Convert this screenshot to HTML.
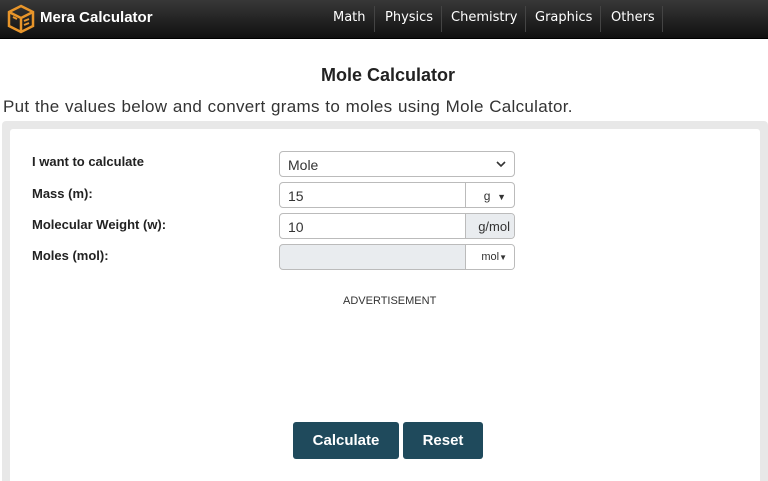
<!DOCTYPE html>
<html><head><style>
*{margin:0;padding:0;box-sizing:border-box}
html,body{width:768px;height:481px;overflow:hidden}
body{background:#fff;font-family:"Liberation Sans",sans-serif;position:relative}
.hdr{position:absolute;left:0;top:0;width:768px;height:39px;background:linear-gradient(#383838,#101010);border-bottom:1px solid #000}
.logo{position:absolute;left:40px;top:9px;color:#fff;font:bold 15px "Liberation Sans",sans-serif}
.nav{position:absolute;top:10px;color:#fff;font:13px "DejaVu Sans",sans-serif}
.sep{position:absolute;top:6px;width:1px;height:26px;background:#444}
h1{position:absolute;top:65px;left:0;width:776px;text-align:center;font-size:18px;font-weight:bold;color:#222}
.sub{position:absolute;top:97px;left:3px;font-size:17px;color:#333;letter-spacing:0.3px;word-spacing:0.5px}
.panel{position:absolute;left:2px;top:121px;width:766px;height:380px;background:#e8e8e8;border-radius:4px}
.inner{position:absolute;left:10px;top:129px;width:750px;height:360px;background:#fff;border-radius:3px}
.lbl{position:absolute;left:32px;font-size:13px;font-weight:bold;color:#222}
.box{position:absolute;left:279px;width:236px;height:26px;border:1px solid #bbb;border-radius:4px;font-size:14px;color:#333;padding:5px 8px;overflow:hidden}
.unit{position:absolute;right:0;top:0;height:100%;border-left:1px solid #bbb;font-size:12px;color:#333;text-align:right;padding:6px 6px}
.btn{position:absolute;top:422px;height:37px;background:#1f4a5c;color:#fff;font-weight:bold;font-size:15px;border-radius:3px;text-align:center;line-height:37px}
</style></head><body>
<div class="hdr">
<svg style="position:absolute;left:6px;top:4px" width="30" height="30" viewBox="0 0 30 30"><path d="M15 2 L27 8 L27 22 L15 28 L3 22 L3 8 Z M3 8 L15 14 L27 8 M15 14 L15 28" fill="none" stroke="#e8952a" stroke-width="2.5"/><path d="M7 13 L11 15 M18 17 L23 15 M18 21 L23 19" stroke="#e8952a" stroke-width="2"/></svg>
<div class="logo">Mera Calculator</div>
<div class="nav" style="left:333px">Math</div><div class="sep" style="left:374px"></div>
<div class="nav" style="left:385px">Physics</div><div class="sep" style="left:441px"></div>
<div class="nav" style="left:451px">Chemistry</div><div class="sep" style="left:525px"></div>
<div class="nav" style="left:535px">Graphics</div><div class="sep" style="left:600px"></div>
<div class="nav" style="left:611px">Others</div><div class="sep" style="left:662px"></div>
</div>
<h1>Mole Calculator</h1>
<div class="sub">Put the values below and convert grams to moles using Mole Calculator.</div>
<div class="panel"></div><div class="inner"></div>
<div class="lbl" style="top:154px">I want to calculate</div>
<div class="lbl" style="top:186px">Mass (m):</div>
<div class="lbl" style="top:217px">Molecular Weight (w):</div>
<div class="lbl" style="top:248px">Moles (mol):</div>
<div class="box" style="top:151px">Mole<svg style="position:absolute;right:8px;top:9px" width="10" height="7" viewBox="0 0 10 7"><path d="M1 1 L5 5 L9 1" fill="none" stroke="#333" stroke-width="1.6"/></svg></div>
<div class="box" style="top:182px">15<div class="unit" style="width:49px;padding-right:8px">g &nbsp;<span style="font-size:9px">&#9660;</span></div></div>
<div class="box" style="top:213px">10<div class="unit" style="width:49px;background:#e9ecef;font-size:13px;padding:5px 4px">g/mol</div></div>
<div class="box" style="top:244px;background:#e9ecef">&nbsp;<div class="unit" style="width:49px;background:#fff;font-size:11px;padding-right:7px">mol<span style="font-size:8px">&#9660;</span></div></div>
<div style="position:absolute;top:295px;left:343px;font-size:11px;color:#333">ADVERTISEMENT</div>
<div class="btn" style="left:293px;width:106px">Calculate</div>
<div class="btn" style="left:403px;width:80px">Reset</div>
</body></html>
